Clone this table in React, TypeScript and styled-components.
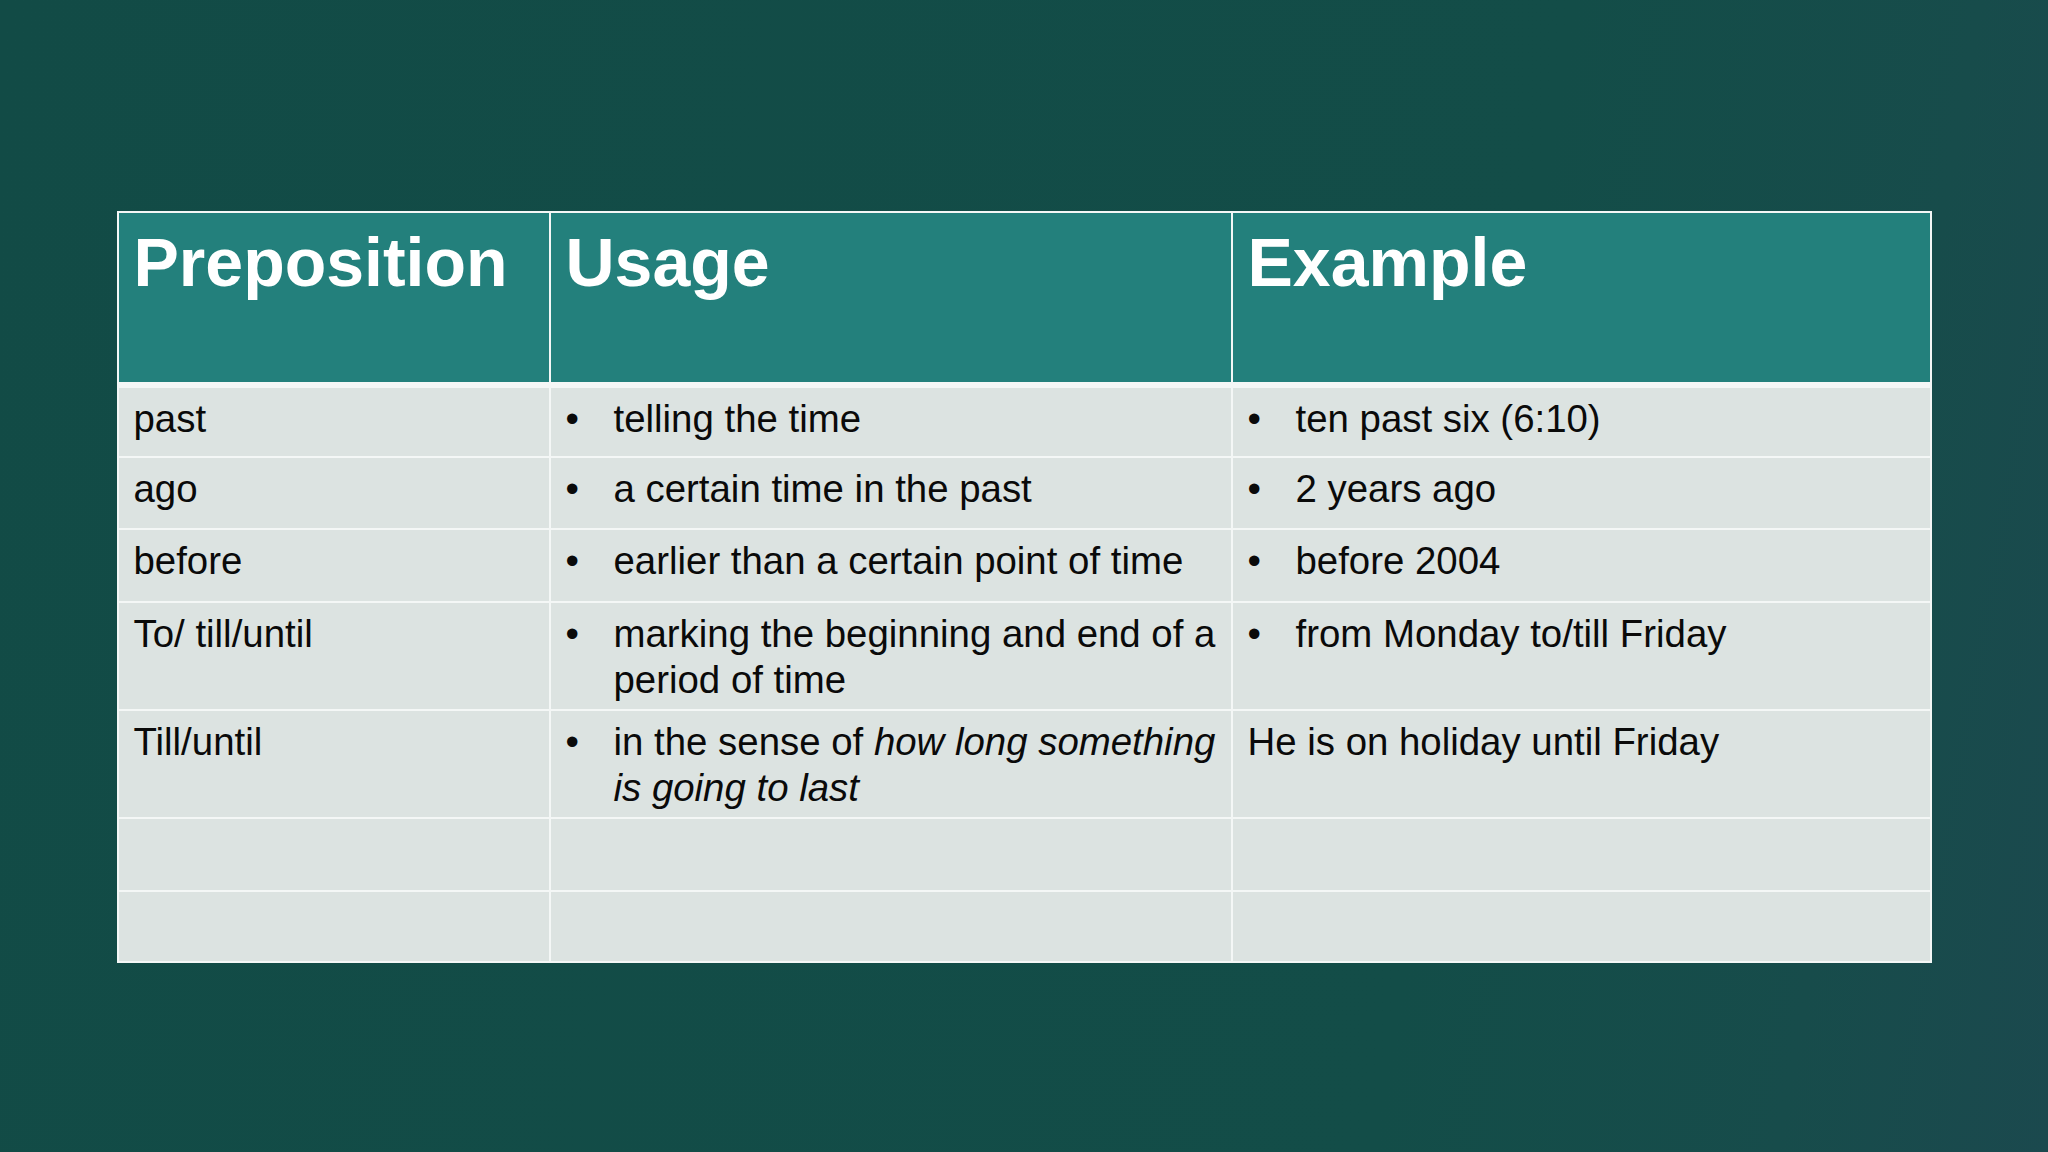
import React from "react";
import styled, { createGlobalStyle } from "styled-components";

interface IRow {
  preposition: string;
  usage?: React.ReactNode;
  example?: React.ReactNode;
  exampleBullet?: boolean;
}

const rows: IRow[] = [
  { preposition: "past", usage: "telling the time", example: "ten past six (6:10)", exampleBullet: true },
  { preposition: "ago", usage: "a certain time in the past", example: "2 years ago", exampleBullet: true },
  { preposition: "before", usage: "earlier than a certain point of time", example: "before 2004", exampleBullet: true },
  {
    preposition: "To/ till/until",
    usage: "marking the beginning and end of a period of time",
    example: "from Monday to/till Friday",
    exampleBullet: true,
  },
  {
    preposition: "Till/until",
    usage: (
      <>
        in the sense of <em>how long something is going to last</em>
      </>
    ),
    example: "He is on holiday until Friday",
    exampleBullet: false,
  },
  { preposition: "" },
  { preposition: "" },
];

const BulletText = ({ children }: { children: React.ReactNode }) => (
  <BulletItemStyle>
    <BulletMarkStyle>•</BulletMarkStyle>
    <BulletBodyStyle>{children}</BulletBodyStyle>
  </BulletItemStyle>
);

const App = () => {
  return (
    <>
      <GlobalStyle />
      <SlideStyle>
        <TableStyle>
          <HeadCellStyle>Preposition</HeadCellStyle>
          <HeadCellStyle>Usage</HeadCellStyle>
          <HeadCellStyle>Example</HeadCellStyle>

          {rows.map((row, i) => (
            <React.Fragment key={i}>
              <CellStyle>{row.preposition || "\u00a0"}</CellStyle>
              <CellStyle>{row.usage ? <BulletText>{row.usage}</BulletText> : "\u00a0"}</CellStyle>
              <CellStyle>
                {row.example ? (
                  row.exampleBullet ? (
                    <BulletText>{row.example}</BulletText>
                  ) : (
                    row.example
                  )
                ) : (
                  "\u00a0"
                )}
              </CellStyle>
            </React.Fragment>
          ))}
        </TableStyle>
      </SlideStyle>
    </>
  );
};

const GlobalStyle = createGlobalStyle`
  html, body {
    margin: 0;
    padding: 0;
  }
  body {
    font-family: "Liberation Sans", Arial, sans-serif;
  }
`;

const SlideStyle = styled.div`
  width: 2048px;
  height: 1152px;
  box-sizing: border-box;
  padding-top: 211px;
  display: flex;
  justify-content: center;
  align-items: flex-start;
  background: linear-gradient(100deg, #124b46 0%, #134d48 70%, #174c4b 88%, #1b494e 100%);
`;

const TableStyle = styled.div`
  display: grid;
  grid-template-columns: 430px 680px 697px;
  grid-template-rows: 173px 68px 70px 71px 106px 106px 71px 69px;
  gap: 2px;
  padding: 2px;
  background: #f4f7f6;
`;

const HeadCellStyle = styled.div`
  box-sizing: border-box;
  background: #23807c;
  border-bottom: 4px solid #f4f7f6;
  padding: 9px 8px 0 15px;
  color: #ffffff;
  font-size: 68px;
  font-weight: 700;
  line-height: 1.2;
`;

const CellStyle = styled.div`
  box-sizing: border-box;
  background: #dce3e1;
  padding: 8px 8px 0 15px;
  color: #0a0a0a;
  font-size: 38.4px;
  line-height: 46px;
`;

const BulletItemStyle = styled.div`
  display: flex;
  align-items: flex-start;
`;

const BulletMarkStyle = styled.span`
  flex: 0 0 48px;
`;

const BulletBodyStyle = styled.div`
  flex: 1;

  em {
    font-style: italic;
  }
`;

export default App;
